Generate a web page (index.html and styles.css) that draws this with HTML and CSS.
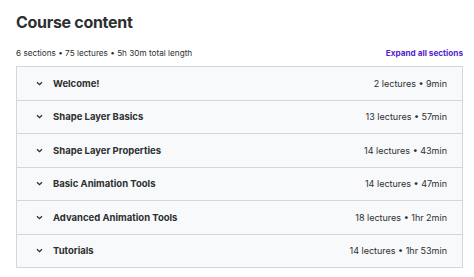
FILE: index.html
```html
<!DOCTYPE html>
<html lang="en">
<head>
    <meta charset="UTF-8">
    <meta name="viewport" content="width=device-width, initial-scale=1.0">
    <title>Course content</title>
    <link rel="stylesheet" href="styles.css">
</head>
<body>
    <div class="container">
        <h2>Course content</h2>
        <div class="summary">
            <span>6 sections • 75 lectures • 5h 30m total length</span>
            <a href="#" class="expand">Expand all sections</a>
        </div>
        <div class="sections">
            <div class="section">
                <span class="chevron"><svg width="7" height="5" viewBox="0 0 7 5"><path d="M1 1.2 L3.5 3.7 L6 1.2" fill="none" stroke="#2d2f31" stroke-width="1.3"/></svg></span>
                <span class="title">Welcome!</span>
                <span class="meta">2 lectures • 9min</span>
            </div>
            <div class="section">
                <span class="chevron"><svg width="7" height="5" viewBox="0 0 7 5"><path d="M1 1.2 L3.5 3.7 L6 1.2" fill="none" stroke="#2d2f31" stroke-width="1.3"/></svg></span>
                <span class="title">Shape Layer Basics</span>
                <span class="meta">13 lectures • 57min</span>
            </div>
            <div class="section">
                <span class="chevron"><svg width="7" height="5" viewBox="0 0 7 5"><path d="M1 1.2 L3.5 3.7 L6 1.2" fill="none" stroke="#2d2f31" stroke-width="1.3"/></svg></span>
                <span class="title">Shape Layer Properties</span>
                <span class="meta">14 lectures • 43min</span>
            </div>
            <div class="section">
                <span class="chevron"><svg width="7" height="5" viewBox="0 0 7 5"><path d="M1 1.2 L3.5 3.7 L6 1.2" fill="none" stroke="#2d2f31" stroke-width="1.3"/></svg></span>
                <span class="title">Basic Animation Tools</span>
                <span class="meta">14 lectures • 47min</span>
            </div>
            <div class="section">
                <span class="chevron"><svg width="7" height="5" viewBox="0 0 7 5"><path d="M1 1.2 L3.5 3.7 L6 1.2" fill="none" stroke="#2d2f31" stroke-width="1.3"/></svg></span>
                <span class="title">Advanced Animation Tools</span>
                <span class="meta">18 lectures • 1hr 2min</span>
            </div>
            <div class="section">
                <span class="chevron"><svg width="7" height="5" viewBox="0 0 7 5"><path d="M1 1.2 L3.5 3.7 L6 1.2" fill="none" stroke="#2d2f31" stroke-width="1.3"/></svg></span>
                <span class="title">Tutorials</span>
                <span class="meta">14 lectures • 1hr 53min</span>
            </div>
        </div>
    </div>
</body>
</html>
```

FILE: styles.css
```css
body {
    margin: 0;
    font-family: Inter, "Noto Sans", sans-serif;
    color: #2d2f31;
    background-color: #fff;
}
.container {
    width: 447px;
    padding: 11px 0 0 16px;
}
h2 {
    margin: 0;
    font-size: 16px;
    font-weight: 700;
    letter-spacing: -0.3px;
    line-height: 22px;
}
.summary {
    display: flex;
    justify-content: space-between;
    align-items: center;
    margin-top: 13px;
    height: 14px;
    font-size: 8.2px;
    margin-bottom: 6px;
}
.expand {
    color: #5624d0;
    font-weight: 700;
    text-decoration: none;
}
.sections {
    border: 1px solid #d1d7dc;
    border-bottom: none;
}
.section {
    display: flex;
    align-items: center;
    height: 32.5px;
    padding: 0 15px 0 19px;
    background-color: #f7f9fa;
    border-bottom: 1px solid #d1d7dc;
    font-size: 9.5px;
}
.chevron {
    display: flex;
    width: 17px;
}
.title {
    flex: 1;
    font-weight: 700;
}
.meta {
    font-size: 9px;
}
```
